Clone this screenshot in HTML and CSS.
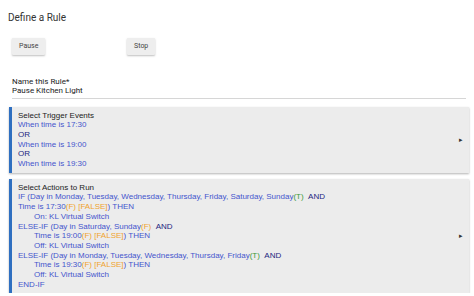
FILE: index.html
```html
<!DOCTYPE html>
<html lang="en">
<head>
<meta charset="UTF-8">
<meta name="viewport" content="width=device-width, initial-scale=1.0">
<title>Define a Rule</title>
<link rel="stylesheet" href="styles.css">
</head>
<body>

<!-- title -->
<div class="page-title">Define a Rule</div>

<!-- buttons -->
<div class="btn-row">
  <div class="btn-cell"><button class="btn">Pause</button></div>
  <div class="btn-cell"><button class="btn">Stop</button></div>
</div>

<!-- rule name -->
<div class="name-field">
  <div class="name-label">Name this Rule*</div>
  <div class="name-value">Pause Kitchen Light</div>
</div>

<!-- triggers -->
<div class="section">
  <div class="section-body">
    <div class="section-title">Select Trigger Events</div>
    <div class="b">When time is 17:30</div>
    <div class="n">OR</div>
    <div class="b">When time is 19:00</div>
    <div class="n">OR</div>
    <div class="b">When time is 19:30</div>
  </div>
  <div class="arrow">&#9656;</div>
</div>

<!-- actions -->
<div class="section">
  <div class="section-body">
    <div class="section-title">Select Actions to Run</div>
    <div class="b">IF (Day in Monday, Tuesday, Wednesday, Thursday, Friday, Saturday, Sunday<span class="t">(T)</span> <span class="n">&nbsp;AND</span></div>
    <div class="b">Time is 17:30<span class="f">(F) [FALSE]</span>) THEN</div>
    <div class="b i2">On: KL Virtual Switch</div>
    <div class="b">ELSE-IF (Day in Saturday, Sunday<span class="f">(F)</span> <span class="n">&nbsp;AND</span></div>
    <div class="b i1">Time is 19:00<span class="f">(F) [FALSE]</span>) THEN</div>
    <div class="b i2">Off: KL Virtual Switch</div>
    <div class="b">ELSE-IF (Day in Monday, Tuesday, Wednesday, Thursday, Friday<span class="t">(T)</span> <span class="n">&nbsp;AND</span></div>
    <div class="b i1">Time is 19:30<span class="f">(F) [FALSE]</span>) THEN</div>
    <div class="b i2">Off: KL Virtual Switch</div>
    <div class="b">END-IF</div>
  </div>
  <div class="arrow">&#9656;</div>
</div>

</body>
</html>
```

FILE: styles.css
```css
/* page */
body {
  margin: 0;
  padding: 12px 5px 0 8px;
  font-family: Roboto, "Liberation Sans", sans-serif;
  color: #333;
  background: #fff;
}

/* title */
.page-title {
  font-size: 10px;
  line-height: 12px;
}

/* buttons */
.btn-row {
  display: flex;
  margin-top: 9px;
  padding-left: 4px;
}

.btn-cell {
  width: 115px;
}

.btn {
  font-family: Roboto, "Liberation Sans", sans-serif;
  font-size: 7px;
  color: #444;
  height: 17px;
  padding: 0 7px;
  border: none;
  border-radius: 1px;
  background: #eeeeee;
  box-shadow: 0 1px 2px rgba(0, 0, 0, .25);
}

/* rule name */
.name-field {
  margin: 22px 0 0 4px;
  width: 454px;
  border-bottom: 1px solid #d6d6d6;
  padding-bottom: 3px;
  font-size: 8px;
  line-height: 9px;
  color: #222;
}

/* section boxes */
.section {
  display: flex;
  align-items: center;
  margin: 8px 0 0 1px;
  width: 457px;
  background: #ececec;
  border-left: 3px solid #2f6fc0;
  box-shadow: 0 1px 2px rgba(0, 0, 0, .3);
  font-family: "Liberation Sans", Arial, sans-serif;
  font-size: 8px;
  line-height: 9.7px;
}

.section + .section {
  margin-top: 6px;
}

.section-body {
  flex: 1;
  padding: 4px 0 4px 6px;
}

.section-title {
  color: #222;
}

.arrow {
  font-size: 7px;
  color: #333;
  padding-right: 6px;
}

/* line colors */
.b { color: #4455cc; }
.n { color: #1c1f80; }
.t { color: #3a9a3a; }
.f { color: #f0a32c; }

.i1 { padding-left: 16px; }
.i2 { padding-left: 16px; }
```
